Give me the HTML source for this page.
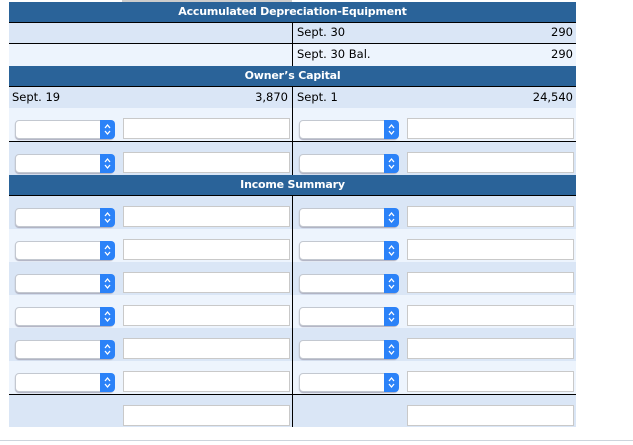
<html><head><style>
body{margin:0;width:633px;height:445px;background:#fff;position:relative;overflow:hidden;font-family:Verdana,"DejaVu Sans",sans-serif;font-size:11.5px;color:#000}
div{position:absolute;box-sizing:border-box}
.h{left:9px;width:567px;height:20px;background:#2a6399;color:#fff;font-weight:bold;text-align:center;line-height:19px;font-size:11px;letter-spacing:-0.2px}
.d{background:#dae6f6}.l{background:#edf4fd}
.r{left:9px;width:567px}
.hl{left:9px;width:567px;height:1px;background:#000}
.vl{left:292px;width:1px;background:#000}
.s{width:99px;height:19px;border:1px solid #c3c8d0;border-radius:4px;background:#fff;box-shadow:0 1px 1px #aab}
.s svg{position:absolute;right:-1px;top:-1px}
.i{width:167px;height:21px;border:1px solid #c9c9c9;background:#fff}
.t{line-height:21px}
</style></head><body>
<div style="left:122px;top:0;width:170px;height:2px;background:#ccc"></div>
<div class="h" style="top:2px">Accumulated Depreciation-Equipment</div>
<div class="r d" style="top:22px;height:22px"></div>
<div class="r l" style="top:44px;height:22px"></div>
<div class="hl" style="top:43px"></div>
<div class="hl" style="top:22px"></div>
<div class="t" style="left:297px;top:22px">Sept. 30</div><div class="t" style="left:520px;top:22px;width:53px;text-align:right">290</div>
<div class="t" style="left:297px;top:44px">Sept. 30 Bal.</div><div class="t" style="left:520px;top:44px;width:53px;text-align:right">290</div>
<div class="vl" style="top:22px;height:44px"></div>
<div class="h" style="top:66px">Owner’s Capital</div>
<div class="r d" style="top:86px;height:22px"></div>
<div class="r l" style="top:108px;height:33px"></div>
<div class="r d" style="top:142px;height:33px"></div>
<div class="hl" style="top:86px"></div>
<div class="hl" style="top:141px"></div>
<div class="t" style="left:12px;top:87px">Sept. 19</div><div class="t" style="left:220px;top:87px;width:68px;text-align:right">3,870</div>
<div class="t" style="left:297px;top:87px">Sept. 1</div><div class="t" style="left:500px;top:87px;width:73px;text-align:right">24,540</div>
<div class="vl" style="top:86px;height:89px"></div>
<div class="h" style="top:175px">Income Summary</div>
<div class="r d" style="top:195px;height:34px"></div>
<div class="r l" style="top:229px;height:33px"></div>
<div class="r d" style="top:262px;height:33px"></div>
<div class="r l" style="top:295px;height:33px"></div>
<div class="r d" style="top:328px;height:33px"></div>
<div class="r l" style="top:361px;height:33px"></div>
<div class="r d" style="top:395px;height:32px"></div>
<div class="hl" style="top:195px"></div>
<div class="hl" style="top:394px"></div>
<div class="vl" style="top:195px;height:232px"></div>
<div style="left:0;top:440px;width:633px;height:1px;background:#cdd4dc"></div>
<svg width="0" height="0" style="position:absolute"><defs><g id="a"><path d="M0 0h11a4 4 0 0 1 4 4v11a4 4 0 0 1-4 4H0z" fill="#2b82f8"/><path d="M5 8l2.5-3 2.5 3M5 11l2.5 3 2.5-3" stroke="#fff" stroke-width="1.3" fill="none"/></g></defs></svg>
<div class="s" style="left:15px;top:120px"><svg width="15" height="19" style="left:84px"><use href="#a"/></svg></div><div class="i" style="left:123px;top:118px"></div>
<div class="s" style="left:299px;top:120px"><svg width="15" height="19" style="left:84px"><use href="#a"/></svg></div><div class="i" style="left:407px;top:118px"></div>
<div class="s" style="left:15px;top:154px"><svg width="15" height="19" style="left:84px"><use href="#a"/></svg></div><div class="i" style="left:123px;top:152px"></div>
<div class="s" style="left:299px;top:154px"><svg width="15" height="19" style="left:84px"><use href="#a"/></svg></div><div class="i" style="left:407px;top:152px"></div>

<div class="s" style="left:15px;top:208px"><svg width="15" height="19" style="left:84px"><use href="#a"/></svg></div><div class="i" style="left:123px;top:206px"></div>
<div class="s" style="left:299px;top:208px"><svg width="15" height="19" style="left:84px"><use href="#a"/></svg></div><div class="i" style="left:407px;top:206px"></div>
<div class="s" style="left:15px;top:241px"><svg width="15" height="19" style="left:84px"><use href="#a"/></svg></div><div class="i" style="left:123px;top:239px"></div>
<div class="s" style="left:299px;top:241px"><svg width="15" height="19" style="left:84px"><use href="#a"/></svg></div><div class="i" style="left:407px;top:239px"></div>
<div class="s" style="left:15px;top:274px"><svg width="15" height="19" style="left:84px"><use href="#a"/></svg></div><div class="i" style="left:123px;top:272px"></div>
<div class="s" style="left:299px;top:274px"><svg width="15" height="19" style="left:84px"><use href="#a"/></svg></div><div class="i" style="left:407px;top:272px"></div>
<div class="s" style="left:15px;top:307px"><svg width="15" height="19" style="left:84px"><use href="#a"/></svg></div><div class="i" style="left:123px;top:305px"></div>
<div class="s" style="left:299px;top:307px"><svg width="15" height="19" style="left:84px"><use href="#a"/></svg></div><div class="i" style="left:407px;top:305px"></div>
<div class="s" style="left:15px;top:340px"><svg width="15" height="19" style="left:84px"><use href="#a"/></svg></div><div class="i" style="left:123px;top:338px"></div>
<div class="s" style="left:299px;top:340px"><svg width="15" height="19" style="left:84px"><use href="#a"/></svg></div><div class="i" style="left:407px;top:338px"></div>
<div class="s" style="left:15px;top:373px"><svg width="15" height="19" style="left:84px"><use href="#a"/></svg></div><div class="i" style="left:123px;top:371px"></div>
<div class="s" style="left:299px;top:373px"><svg width="15" height="19" style="left:84px"><use href="#a"/></svg></div><div class="i" style="left:407px;top:371px"></div>
<div class="i" style="left:123px;top:405px"></div>
<div class="i" style="left:407px;top:405px"></div>
</body></html>
